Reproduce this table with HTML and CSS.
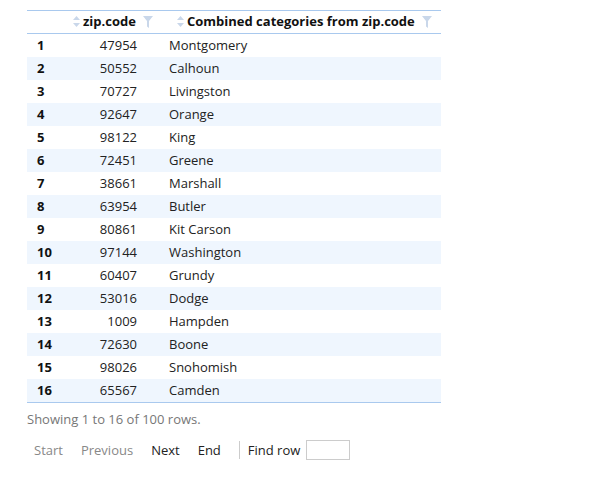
FILE: index.html
```html
<!DOCTYPE html>
<html>
<head>
<meta charset="utf-8">
<link rel="stylesheet" href="styles.css">
</head>
<body>
<div class="wrap">
<table class="tbl">
<colgroup><col class="w-idx"><col class="w-zip"><col class="w-name"></colgroup>
<thead>
<tr>
<th class="c-idx"></th>
<th class="c-zip"><span class="sort"><svg width="7" height="11" viewBox="0 0 7 11"><path d="M3.5 0L7 4H0z" fill="#c9d7ea"/><path d="M3.5 11L7 7H0z" fill="#c9d7ea"/></svg></span><span class="hl">zip.code</span><span class="filt"><svg width="10" height="12" viewBox="0 0 10 12"><path d="M0 0H10L6 5V12L4 10.5V5Z" fill="#c9d7ea"/></svg></span></th>
<th class="c-name"><span class="sort"><svg width="7" height="11" viewBox="0 0 7 11"><path d="M3.5 0L7 4H0z" fill="#c9d7ea"/><path d="M3.5 11L7 7H0z" fill="#c9d7ea"/></svg></span><span class="hl">Combined categories from zip.code</span><span class="filt"><svg width="10" height="12" viewBox="0 0 10 12"><path d="M0 0H10L6 5V12L4 10.5V5Z" fill="#c9d7ea"/></svg></span></th>
</tr>
</thead>
<tbody>
<tr><td class="c-idx">1</td><td class="c-zip">47954</td><td class="c-name">Montgomery</td></tr>
<tr><td class="c-idx">2</td><td class="c-zip">50552</td><td class="c-name">Calhoun</td></tr>
<tr><td class="c-idx">3</td><td class="c-zip">70727</td><td class="c-name">Livingston</td></tr>
<tr><td class="c-idx">4</td><td class="c-zip">92647</td><td class="c-name">Orange</td></tr>
<tr><td class="c-idx">5</td><td class="c-zip">98122</td><td class="c-name">King</td></tr>
<tr><td class="c-idx">6</td><td class="c-zip">72451</td><td class="c-name">Greene</td></tr>
<tr><td class="c-idx">7</td><td class="c-zip">38661</td><td class="c-name">Marshall</td></tr>
<tr><td class="c-idx">8</td><td class="c-zip">63954</td><td class="c-name">Butler</td></tr>
<tr><td class="c-idx">9</td><td class="c-zip">80861</td><td class="c-name">Kit Carson</td></tr>
<tr><td class="c-idx">10</td><td class="c-zip">97144</td><td class="c-name">Washington</td></tr>
<tr><td class="c-idx">11</td><td class="c-zip">60407</td><td class="c-name">Grundy</td></tr>
<tr><td class="c-idx">12</td><td class="c-zip">53016</td><td class="c-name">Dodge</td></tr>
<tr><td class="c-idx">13</td><td class="c-zip">1009</td><td class="c-name">Hampden</td></tr>
<tr><td class="c-idx">14</td><td class="c-zip">72630</td><td class="c-name">Boone</td></tr>
<tr><td class="c-idx">15</td><td class="c-zip">98026</td><td class="c-name">Snohomish</td></tr>
<tr><td class="c-idx">16</td><td class="c-zip">65567</td><td class="c-name">Camden</td></tr>
</tbody>
</table>
<div class="info">Showing 1 to 16 of 100 rows.</div>
<div class="pager">
<span class="pg dis">Start</span>
<span class="pg dis">Previous</span>
<span class="pg">Next</span>
<span class="pg">End</span>
<span class="sep"></span>
<span class="find">Find row</span>
<span class="box"></span>
</div>
</div>
</body>
</html>
```
FILE: styles.css
```css
html, body {
  margin: 0;
  padding: 0;
  background: #fff;
}
body {
  font-family: "Open Sans", "Noto Sans", sans-serif;
  font-size: 13px;
  color: #222;
}
.wrap {
  padding: 10px 0 0 27px;
}
.tbl {
  border-collapse: collapse;
  table-layout: fixed;
  width: 414px;
  border-top: 1px solid #a9c9ee;
  border-bottom: 1px solid #a9c9ee;
}
.w-idx { width: 36px; }
.w-zip { width: 97px; }
.w-name { width: 281px; }
.tbl th {
  font-weight: 700;
  height: 22px;
  padding: 0;
  border-bottom: 1px solid #a9c9ee;
  color: #111;
  white-space: nowrap;
  text-align: left;
}
.tbl td {
  height: 23px;
  padding: 0;
  line-height: 23px;
}
.tbl tbody tr:nth-child(even) td {
  background: #eff6fe;
}
th.c-idx, td.c-idx {
  padding-left: 10px;
  font-weight: 700;
  color: #111;
}
th.c-zip {
  padding-left: 10px;
}
td.c-zip {
  text-align: right;
  padding-right: 23px;
}
th.c-name {
  padding-left: 17px;
}
td.c-name {
  padding-left: 9px;
}
.sort {
  display: inline-block;
  vertical-align: -1px;
  margin-right: 3px;
}
.filt {
  display: inline-block;
  margin-left: 7px;
  vertical-align: -2px;
}
.info {
  color: #777;
  margin-top: 7px;
  line-height: 18px;
}
.pager {
  display: flex;
  align-items: center;
  margin-top: 10px;
  height: 24px;
}
.pg {
  margin-left: 7px;
  margin-right: 11px;
  color: #222;
}
.pg + .pg {
  margin-left: 7px;
}
.pg.dis {
  color: #888;
}
.sep {
  width: 1px;
  height: 18px;
  background: #ccc;
  margin-left: 7px;
  margin-right: 8px;
}
.find {
  color: #222;
  margin-right: 6px;
}
.box {
  display: inline-block;
  width: 42px;
  height: 18px;
  border: 1px solid #ccc;
}
```
